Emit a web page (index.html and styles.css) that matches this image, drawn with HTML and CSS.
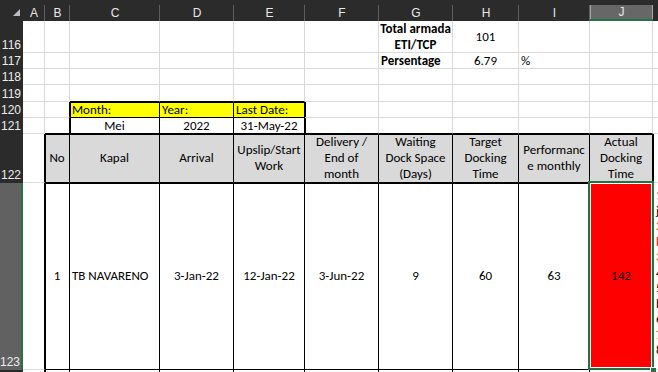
FILE: index.html
```html
<!DOCTYPE html>
<html>
<head>
<meta charset="utf-8">
<link rel="stylesheet" href="styles.css">
</head>
<body>
<div class="sheet">
  <!-- column headers -->
  <div class="corner"><span class="tri"></span></div>
  <div class="ch">A</div><div class="ch">B</div><div class="ch">C</div><div class="ch">D</div><div class="ch">E</div><div class="ch">F</div><div class="ch">G</div><div class="ch">H</div><div class="ch">I</div><div class="ch ch-sel">J</div><div class="ch"></div>

  <!-- 116 -->
  <div class="rh">116</div>
  <div class="c"></div><div class="c"></div><div class="c"></div><div class="c"></div><div class="c"></div><div class="c"></div>
  <div class="c ctr b">Total armada<br>ETI/TCP</div>
  <div class="c ctr">101</div>
  <div class="c"></div><div class="c"></div><div class="c"></div>

  <!-- 117 -->
  <div class="rh">117</div>
  <div class="c"></div><div class="c"></div><div class="c"></div><div class="c"></div><div class="c"></div><div class="c"></div>
  <div class="c lft b">Persentage</div>
  <div class="c ctr">6.79</div>
  <div class="c lft">%</div>
  <div class="c"></div><div class="c"></div>

  <!-- 118 -->
  <div class="rh">118</div>
  <div class="c"></div><div class="c"></div><div class="c"></div><div class="c"></div><div class="c"></div><div class="c"></div><div class="c"></div><div class="c"></div><div class="c"></div><div class="c"></div><div class="c"></div>

  <!-- 119 -->
  <div class="rh">119</div>
  <div class="c"></div><div class="c"></div>
  <div class="c bb"></div><div class="c bb"></div><div class="c bb"></div>
  <div class="c"></div><div class="c"></div><div class="c"></div><div class="c"></div><div class="c"></div><div class="c"></div>

  <!-- 120 -->
  <div class="rh">120</div>
  <div class="c"></div>
  <div class="c br"></div>
  <div class="c lft yel br bb sl st">Month:</div>
  <div class="c lft yel br bb st">Year:</div>
  <div class="c lft yel br bb st">Last Date:</div>
  <div class="c sl"></div>
  <div class="c"></div><div class="c"></div><div class="c"></div><div class="c"></div><div class="c"></div>

  <!-- 121 -->
  <div class="rh">121</div>
  <div class="c"></div>
  <div class="c br bb"></div>
  <div class="c ctr br bb sl">Mei</div>
  <div class="c ctr br bb">2022</div>
  <div class="c ctr br bb">31-May-22</div>
  <div class="c bb sl"></div>
  <div class="c bb"></div><div class="c bb"></div><div class="c bb"></div><div class="c bb"></div>
  <div class="c"></div>

  <!-- 122 -->
  <div class="rh">122</div>
  <div class="c br"></div>
  <div class="c ctr hd br bb sl st">No</div>
  <div class="c ctr hd br bb st">Kapal</div>
  <div class="c ctr hd br bb st">Arrival</div>
  <div class="c ctr hd br bb st">Upslip/Start<br>Work</div>
  <div class="c ctr hd br bb st">Delivery /<br>End of<br>month</div>
  <div class="c ctr hd br bb st">Waiting<br>Dock Space<br>(Days)</div>
  <div class="c ctr hd br bb st">Target<br>Docking<br>Time</div>
  <div class="c ctr hd br bb st">Performanc<br>e monthly</div>
  <div class="c ctr hd br bb st">Actual<br>Docking<br>Time</div>
  <div class="c sl"></div>

  <!-- 123 -->
  <div class="rh rh-sel">123</div>
  <div class="c br"></div>
  <div class="c ctr br bb sl st">1</div>
  <div class="c lft br bb st">TB NAVARENO</div>
  <div class="c ctr br bb st">3-Jan-22</div>
  <div class="c ctr br bb st">12-Jan-22</div>
  <div class="c ctr br bb st">3-Jun-22</div>
  <div class="c ctr br bb st">9</div>
  <div class="c ctr br bb st">60</div>
  <div class="c ctr br bb st">63</div>
  <div class="c ctr br bb st red sel">142</div>
  <div class="c sl kcell">
    <span>1</span><span>j</span><span class="o">2</span><span class="r">l</span><span class="o">3</span><span>4</span><span>5</span><span>l</span><span>6</span><span class="o">7</span><span>8</span>
  </div>

  <!-- 124 -->
  <div class="rh"></div>
  <div class="c br"></div>
  <div class="c br sl"></div>
  <div class="c br"></div><div class="c br"></div><div class="c br"></div><div class="c br"></div><div class="c br"></div><div class="c br"></div><div class="c br"></div><div class="c br"></div>
  <div class="c sl"></div>
</div>
</body>
</html>
```

FILE: styles.css
```css
html, body {
  margin: 0;
  padding: 0;
  background: #ffffff;
}

.sheet {
  display: grid;
  grid-template-columns: 23px 22px 25px 90px 74px 71px 74px 74px 66px 71px 63px 30px;
  grid-template-rows: 21px 32px 16px 16px 17px 16px 16px 49px 187px 20px;
  width: 658px;
  height: 372px;
  overflow: hidden;
  font-family: Carlito, Lato, "Liberation Sans", sans-serif;
  font-size: 13px;
  color: #000;
}

.corner {
  background: #2b2b2b;
  display: flex;
  align-items: flex-end;
  justify-content: flex-end;
  padding: 0 3px 5px 0;
  box-sizing: border-box;
}

.tri {
  width: 0;
  height: 0;
  border-left: 7px solid transparent;
  border-bottom: 7px solid #bdbdbd;
}

.ch {
  background:
    linear-gradient(#5e5e5e, #5e5e5e) right 0 top 5px / 1px 100% no-repeat,
    #2b2b2b;
  color: #e8e8e8;
  font-family: "Liberation Sans", Arial, sans-serif;
  font-size: 12px;
  line-height: 16px;
  padding-top: 5px;
  text-align: center;
  box-sizing: border-box;
}

.ch-sel {
  background:
    linear-gradient(#2b2b2b, #2b2b2b) top / 100% 5px no-repeat,
    linear-gradient(#a6a6a6, #a6a6a6) right 0 top 5px / 1px 100% no-repeat,
    linear-gradient(#a6a6a6, #a6a6a6) left 0 top 5px / 1px 100% no-repeat,
    #676767;
  border-bottom: 2px solid #217346;
  line-height: 14px;
}

.rh {
  background: #2b2b2b;
  color: #ececec;
  font-family: "Liberation Sans", Arial, sans-serif;
  font-size: 12px;
  line-height: 14px;
  display: flex;
  align-items: flex-end;
  justify-content: flex-end;
  padding: 0 2px 1px 0;
  box-sizing: border-box;
}

.rh-sel {
  background: #616161;
  border-right: 2px solid #217346;
  padding-right: 1px;
}

.c {
  box-sizing: border-box;
  border-right: 1px solid #dadada;
  border-bottom: 1px solid #dadada;
  display: flex;
  flex-direction: column;
  justify-content: center;
  white-space: nowrap;
  overflow: hidden;
  line-height: 16px;
}

.ctr {
  align-items: center;
  text-align: center;
}

.lft {
  align-items: flex-start;
  padding-left: 2px;
}

.b {
  font-weight: bold;
}

.br {
  border-right-color: #000;
}

.bb {
  border-bottom-color: #000;
}

.sl {
  box-shadow: inset 1px 0 0 #000;
}

.st {
  box-shadow: inset 0 1px 0 #000;
}

.sl.st {
  box-shadow: inset 1px 1px 0 #000;
}

.yel {
  background-color: #ffff00;
}

.hd {
  background-color: #d9d9d9;
}

.red {
  background-color: #ff0000;
}

.sel {
  position: relative;
  overflow: visible;
}

.sel::after {
  content: "";
  position: absolute;
  left: -2px;
  top: -2px;
  right: -2px;
  bottom: -1px;
  border: 2px solid #217346;
  box-shadow: inset 0 0 0 1px #fff;
  pointer-events: none;
}

.sel::before {
  content: "";
  position: absolute;
  right: -5px;
  bottom: -5px;
  width: 5px;
  height: 5px;
  background: #217346;
  border: 1px solid #fff;
  z-index: 2;
}

.kcell {
  justify-content: flex-start;
  padding: 4px 0 0 3px;
  line-height: 15.5px;
}

.kcell span {
  display: block;
}

.kcell .o {
  color: #c55a11;
}

.kcell .r {
  color: #ff0000;
}
```
